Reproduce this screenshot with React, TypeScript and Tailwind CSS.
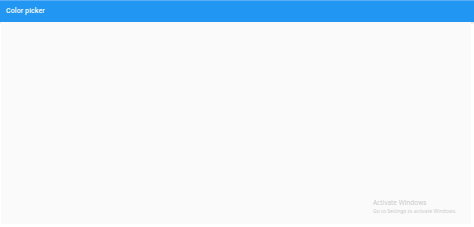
import React from 'react';

export default function App() {
  return (
    <div className="w-[474px] h-[227px] bg-white flex flex-col font-['Roboto',sans-serif] overflow-hidden">
      <header className="h-[22px] shrink-0 bg-[#2196f3] border-t border-[#5aaef5] flex items-center px-[6px] shadow-[0_1px_2px_rgba(0,0,0,0.2)]">
        <h1 className="text-[7px] font-medium text-white tracking-[0.1px]">Color picker</h1>
      </header>
      <main className="relative flex-1 ml-px mr-[3px] mb-[3px] bg-[#fafafa]">
        <div className="absolute left-[372px] top-[178px] text-[#c8c8c8] leading-none font-['Open_Sans',sans-serif]">
          <p className="text-[6.5px]">Activate Windows</p>
          <p className="text-[5.1px] mt-[2px] whitespace-nowrap">Go to Settings to activate Windows.</p>
        </div>
      </main>
    </div>
  );
}
